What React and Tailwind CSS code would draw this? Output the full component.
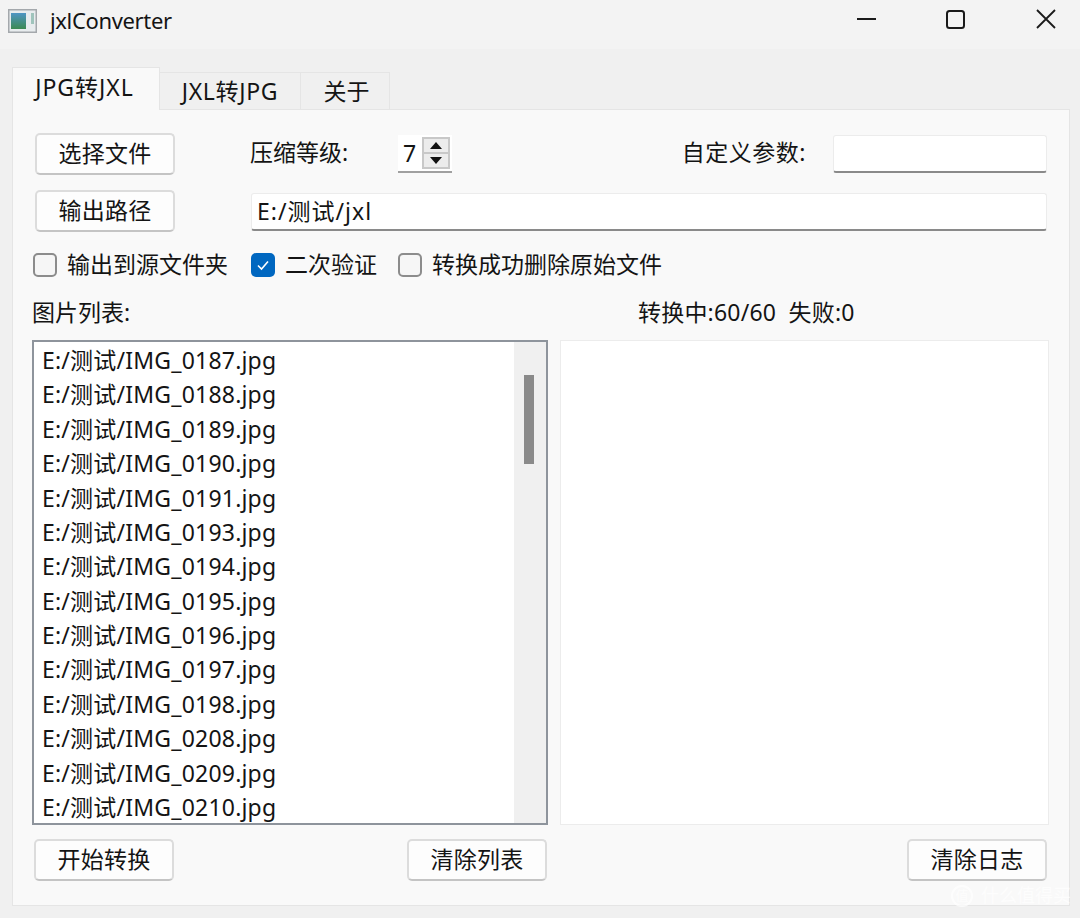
import React from 'react';

const files = ['0187', '0188', '0189', '0190', '0191', '0193', '0194', '0195', '0196', '0197', '0198', '0208', '0209', '0210'];

const Btn = ({ className = '', children }) => (
  <div className={`flex h-[42px] w-[140px] shrink-0 items-center justify-center rounded-[5px] border-2 border-[#dcdcdc] border-b-[#c4c4c4] bg-[#fdfdfd] pb-[2px] tracking-[0.3px] ${className}`}>
    {children}
  </div>
);

const Field = ({ className = '', children }) => (
  <div className={`flex h-[38px] items-center rounded-[3px] border border-[#ececec] border-b-2 border-b-[#8a8a8a] bg-white pl-[5px] ${className}`}>
    {children}
  </div>
);

const Check = ({ checked, label, className = '' }) => (
  <div className={`flex items-center ${className}`}>
    {checked ? (
      <div className="flex h-[24px] w-[24px] items-center justify-center rounded-[5px] bg-[#0067c0]">
        <svg width="14" height="12" viewBox="0 0 14 12" fill="none">
          <path d="M2 6.5L5.5 10L12 2.5" stroke="#fff" strokeWidth="1.6" />
        </svg>
      </div>
    ) : (
      <div className="h-[24px] w-[24px] rounded-[5px] border-2 border-[#8c8c8c] bg-[#f6f6f6]" />
    )}
    <span className="ml-[10px] pb-[1px]">{label}</span>
  </div>
);

const App = () => {
  return (
    <div
      className="relative flex h-[918px] w-[1080px] flex-col overflow-hidden bg-[#f0f0f0] text-[23px] text-[#141414]"
      style={{ fontFamily: '"Noto Sans", "Noto Sans CJK SC", sans-serif' }}
    >
      {/* title bar */}
      <div className="flex h-[49px] shrink-0 items-center bg-[#f3f3f3] pl-[8px]">
        <svg width="29" height="24" viewBox="0 0 29 24" className="-mt-[7px] shrink-0">
          <rect x="0.75" y="0.75" width="27.5" height="22.5" fill="#e8ecee" stroke="#a4a8ac" strokeWidth="1.5" />
          <defs>
            <linearGradient id="ico" x1="0" y1="0" x2="0" y2="1">
              <stop offset="0" stopColor="#4f95c4" />
              <stop offset="1" stopColor="#3c8a52" />
            </linearGradient>
          </defs>
          <rect x="3" y="4" width="15" height="16" fill="url(#ico)" />
          <rect x="23" y="4" width="3" height="11" fill="#9fc4bc" />
        </svg>
        <span className="-mt-[8px] ml-[13px] w-[121px] text-[22px] tracking-[-0.35px]">jxlConverter</span>
        <svg width="19" height="2" viewBox="0 0 19 2" className="-mt-[11px] ml-[686px] shrink-0">
          <rect width="19" height="2" fill="#1a1a1a" />
        </svg>
        <svg width="19" height="19" viewBox="0 0 19 19" fill="none" className="-mt-[11px] ml-[70px] shrink-0">
          <rect x="1" y="1" width="17" height="17" rx="2.5" stroke="#1a1a1a" strokeWidth="2" />
        </svg>
        <svg width="20" height="20" viewBox="0 0 20 20" fill="none" className="-mt-[11px] ml-[71px] shrink-0">
          <path d="M1 1L19 19M19 1L1 19" stroke="#1a1a1a" strokeWidth="1.8" />
        </svg>
      </div>

      <div className="px-[12px] pt-[18px]">
        {/* tabs */}
        <div className="relative z-10 -mb-px flex h-[43px] items-end">
          <div className="flex h-[43px] w-[148px] items-center justify-center border border-b-0 border-[#e5e5e5] bg-[#f9f9f9] pb-[4px] pr-[3px] tracking-[1px]">JPG转JXL</div>
          <div className="flex h-[38px] w-[141px] items-center justify-center border border-l-0 border-[#e5e5e5] bg-[#f0f0f0] tracking-[0.7px]">JXL转JPG</div>
          <div className="flex h-[38px] w-[89px] items-center justify-center border border-l-0 border-[#e5e5e5] bg-[#f0f0f0] pl-[3px]">关于</div>
        </div>

        {/* pane */}
        <div className="flex h-[797px] w-[1058px] flex-col border border-[#e5e5e5] bg-[#f9f9f9] pl-[22px] pr-[22px] pt-[23px]">
          <div className="flex h-[42px] items-start">
            <Btn>选择文件</Btn>
            <span className="ml-[75px] mt-[2px] w-[148px]">压缩等级:</span>
            <div className="mt-[2px] flex h-[38px] w-[54px] items-center justify-between border-b-2 border-b-[#a0a0a0] bg-white pl-[5px] pr-[2px]">
              <span>7</span>
              <div className="flex h-[32px] w-[28px] flex-col gap-[2px] bg-[#c8c8c8] p-[2px]">
                <div className="flex flex-1 items-center justify-center bg-[#ececec]">
                  <svg width="12" height="7" viewBox="0 0 12 7"><path d="M6 0L12 7H0Z" fill="#111" /></svg>
                </div>
                <div className="flex flex-1 items-center justify-center bg-[#ececec]">
                  <svg width="12" height="7" viewBox="0 0 12 7"><path d="M0 0H12L6 7Z" fill="#111" /></svg>
                </div>
              </div>
            </div>
            <span className="ml-auto mt-[2px] tracking-[0.5px]">自定义参数:</span>
            <Field className="ml-[27px] mt-[2px] w-[214px]" />
          </div>

          <div className="mt-[15px] flex h-[42px] items-start">
            <Btn className="pb-[1px]">输出路径</Btn>
            <Field className="ml-[76px] mt-[3px] flex-1 tracking-[1px]">E:/测试/jxl</Field>
          </div>

          <div className="-ml-[2px] mt-[21px] flex h-[24px] items-center">
            <Check label="输出到源文件夹" />
            <Check checked label="二次验证" className="ml-[23px]" />
            <Check label="转换成功删除原始文件" className="ml-[21px]" />
          </div>

          <div className="-ml-[3px] mt-[20px] flex h-[32px] items-center pb-[2px]">
            <span className="w-[606px]">图片列表:</span>
            <span className="tracking-[0.2px]">转换中:60/60&nbsp;&nbsp;失败:0</span>
          </div>

          <div className="-ml-[3px] -mr-[2px] mt-[11px] flex h-[485px] gap-[12px]">
            <div className="relative w-[516px] overflow-hidden border-2 border-[#8e949c] bg-white pl-[8px] pt-[1px]">
              {files.map((n) => (
                <div key={n} className="flex h-[34.4px] items-center tracking-[0.2px]">E:/测试/IMG_{n}.jpg</div>
              ))}
              {/* scrollbar */}
              <div className="absolute bottom-0 right-0 top-0 w-[32px] bg-[#f0f0f0]">
                <div className="ml-[10px] mt-[33px] h-[89px] w-[10px] bg-[#8a8a8a]" />
              </div>
            </div>
            <div className="w-[489px] border border-[#ececec] bg-white" />
          </div>

          <div className="-ml-px mt-[14px] flex">
            <Btn>开始转换</Btn>
            <Btn className="ml-[233px]">清除列表</Btn>
            <Btn className="ml-auto">清除日志</Btn>
          </div>
        </div>
      </div>

      {/* watermark */}
      <div className="absolute bottom-[9px] right-[9px] flex items-center gap-[8px] text-[18px] text-white/70">
        <span className="flex h-[22px] w-[22px] items-center justify-center rounded-full border-2 border-white/70 text-[13px]">值</span>
        <span>什么值得买</span>
      </div>
    </div>
  );
};

export default App;
